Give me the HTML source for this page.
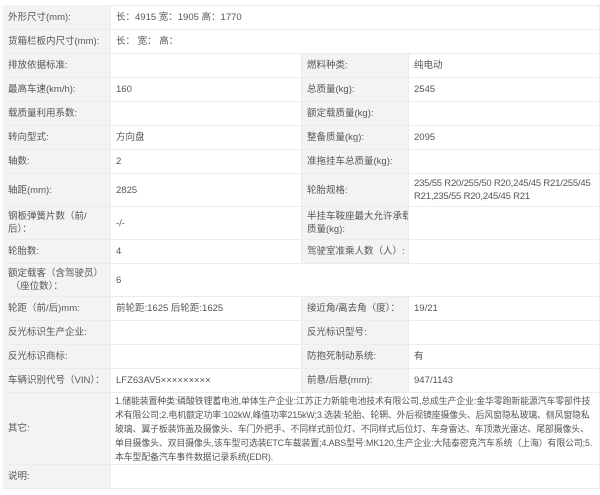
<!DOCTYPE html>
<html><head><meta charset="utf-8"><style>
html,body{margin:0;padding:0;background:#fff;width:600px;height:495px;overflow:hidden;position:relative}
.c{position:absolute;box-sizing:border-box;border-bottom:1px solid #ececec;border-right:1px solid #ececec;font-family:"Liberation Sans","Noto Sans CJK SC",sans-serif;font-size:9.5px;color:#555;display:flex;align-items:center;padding-left:5px;white-space:nowrap;line-height:13px;overflow:hidden}
.l{background:#f3f3f3}
.o{font-size:8.9px;line-height:14px;letter-spacing:-0.1px;padding-left:4px}
.top{position:absolute;left:3px;top:5px;width:597px;border-top:1px solid #ececec}
</style></head><body>
<div class="top"></div>
<div class="c l" style="left:3px;top:5px;width:108px;height:25px">外形尺寸(mm):</div><div class="c" style="left:111px;top:5px;width:489px;height:25px">长：4915 宽：1905 高：1770</div>
<div class="c l" style="left:3px;top:30px;width:108px;height:24px">货箱栏板内尺寸(mm):</div><div class="c" style="left:111px;top:30px;width:489px;height:24px">长： 宽： 高：</div>

<div class="c l" style="left:3px;top:54px;width:108px;height:24px">排放依据标准:</div><div class="c" style="left:111px;top:54px;width:191px;height:24px"></div><div class="c l" style="left:302px;top:54px;width:107px;height:24px">燃料种类:</div><div class="c" style="left:409px;top:54px;width:191px;height:24px">纯电动</div>
<div class="c l" style="left:3px;top:78px;width:108px;height:24px">最高车速(km/h):</div><div class="c" style="left:111px;top:78px;width:191px;height:24px">160</div><div class="c l" style="left:302px;top:78px;width:107px;height:24px">总质量(kg):</div><div class="c" style="left:409px;top:78px;width:191px;height:24px">2545</div>
<div class="c l" style="left:3px;top:102px;width:108px;height:24px">载质量利用系数:</div><div class="c" style="left:111px;top:102px;width:191px;height:24px"></div><div class="c l" style="left:302px;top:102px;width:107px;height:24px">额定载质量(kg):</div><div class="c" style="left:409px;top:102px;width:191px;height:24px"></div>
<div class="c l" style="left:3px;top:126px;width:108px;height:24px">转向型式:</div><div class="c" style="left:111px;top:126px;width:191px;height:24px">方向盘</div><div class="c l" style="left:302px;top:126px;width:107px;height:24px">整备质量(kg):</div><div class="c" style="left:409px;top:126px;width:191px;height:24px">2095</div>
<div class="c l" style="left:3px;top:150px;width:108px;height:24px">轴数:</div><div class="c" style="left:111px;top:150px;width:191px;height:24px">2</div><div class="c l" style="left:302px;top:150px;width:107px;height:24px">准拖挂车总质量(kg):</div><div class="c" style="left:409px;top:150px;width:191px;height:24px"></div>
<div class="c l" style="left:3px;top:174px;width:108px;height:33px">轴距(mm):</div><div class="c" style="left:111px;top:174px;width:191px;height:33px">2825</div><div class="c l" style="left:302px;top:174px;width:107px;height:33px">轮胎规格:</div><div class="c" style="left:409px;top:174px;width:191px;height:33px;letter-spacing:-0.2px">235/55 R20/255/50 R20,245/45 R21/255/45<br>R21,235/55 R20,245/45 R21</div>
<div class="c l" style="left:3px;top:207px;width:108px;height:33px">钢板弹簧片数（前/<br>后）：</div><div class="c" style="left:111px;top:207px;width:191px;height:33px">-/-</div><div class="c l" style="left:302px;top:207px;width:107px;height:33px">半挂车鞍座最大允许承载<br>质量(kg):</div><div class="c" style="left:409px;top:207px;width:191px;height:33px"></div>
<div class="c l" style="left:3px;top:240px;width:108px;height:24px">轮胎数:</div><div class="c" style="left:111px;top:240px;width:191px;height:24px">4</div><div class="c l" style="left:302px;top:240px;width:107px;height:24px">驾驶室准乘人数（人）:</div><div class="c" style="left:409px;top:240px;width:191px;height:24px"></div>
<div class="c l" style="left:3px;top:264px;width:108px;height:33px">额定载客（含驾驶员）<br>&nbsp;（座位数）：</div><div class="c" style="left:111px;top:264px;width:489px;height:33px">6</div>
<div class="c l" style="left:3px;top:297px;width:108px;height:24px">轮距（前/后)mm:</div><div class="c" style="left:111px;top:297px;width:191px;height:24px">前轮距:1625 后轮距:1625</div><div class="c l" style="left:302px;top:297px;width:107px;height:24px">接近角/离去角（度）：</div><div class="c" style="left:409px;top:297px;width:191px;height:24px">19/21</div>
<div class="c l" style="left:3px;top:321px;width:108px;height:24px">反光标识生产企业:</div><div class="c" style="left:111px;top:321px;width:191px;height:24px"></div><div class="c l" style="left:302px;top:321px;width:107px;height:24px">反光标识型号:</div><div class="c" style="left:409px;top:321px;width:191px;height:24px"></div>
<div class="c l" style="left:3px;top:345px;width:108px;height:24px">反光标识商标:</div><div class="c" style="left:111px;top:345px;width:191px;height:24px"></div><div class="c l" style="left:302px;top:345px;width:107px;height:24px">防抱死制动系统:</div><div class="c" style="left:409px;top:345px;width:191px;height:24px">有</div>
<div class="c l" style="left:3px;top:369px;width:108px;height:24px">车辆识别代号（VIN）：</div><div class="c" style="left:111px;top:369px;width:191px;height:24px">LFZ63AV5×××××××××</div><div class="c l" style="left:302px;top:369px;width:107px;height:24px">前悬/后悬(mm):</div><div class="c" style="left:409px;top:369px;width:191px;height:24px">947/1143</div>
<div class="c l" style="left:3px;top:393px;width:108px;height:72px">其它:</div><div class="c o" style="left:111px;top:393px;width:489px;height:72px">1.储能装置种类:磷酸铁锂蓄电池,单体生产企业:江苏正力新能电池技术有限公司,总成生产企业:金华零跑新能源汽车零部件技<br>术有限公司;2.电机额定功率:102kW,峰值功率215kW;3.选装:轮胎、轮辋、外后视镜座摄像头、后风窗隐私玻璃、侧风窗隐私<br>玻璃、翼子板装饰盖及摄像头、车门外把手、不同样式前位灯、不同样式后位灯、车身雷达、车顶激光雷达、尾部摄像头、<br>单目摄像头、双目摄像头,该车型可选装ETC车载装置;4.ABS型号:MK120,生产企业:大陆泰密克汽车系统（上海）有限公司;5.<br>本车型配备汽车事件数据记录系统(EDR).</div>
<div class="c l" style="left:3px;top:465px;width:108px;height:24px">说明:</div><div class="c" style="left:111px;top:465px;width:489px;height:24px"></div>
</body></html>
